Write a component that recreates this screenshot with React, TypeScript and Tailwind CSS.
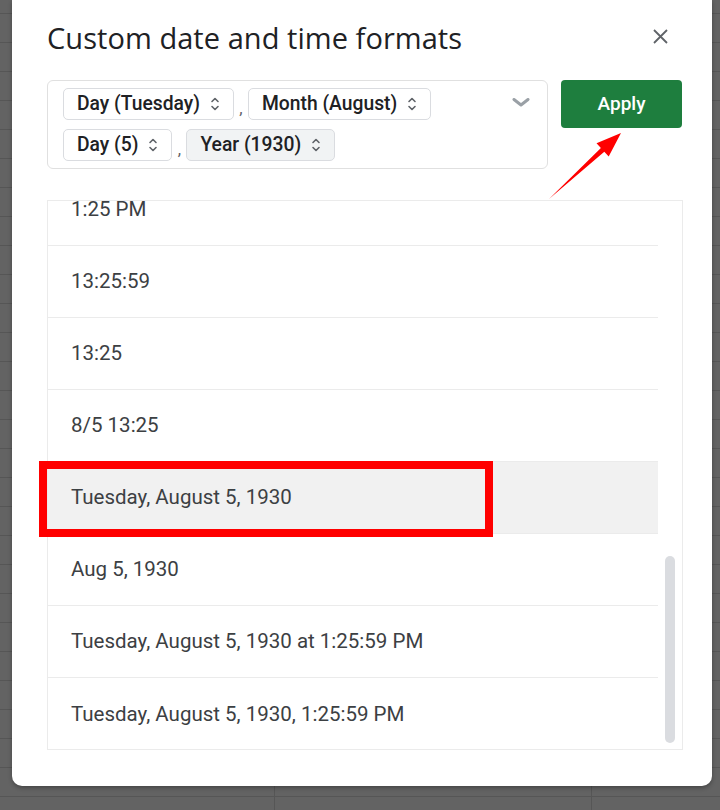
import React from 'react'

const rows = [
  '1:25 PM',
  '13:25:59',
  '13:25',
  '8/5 13:25',
  'Tuesday, August 5, 1930',
  'Aug 5, 1930',
  'Tuesday, August 5, 1930 at 1:25:59 PM',
  'Tuesday, August 5, 1930, 1:25:59 PM',
]

function UpDown() {
  return (
    <svg width="10" height="16" viewBox="0 0 10 16" fill="none" stroke="#5f6368" strokeWidth="1.6" strokeLinecap="round" strokeLinejoin="round">
      <path d="M2 5.5L5 2.5L8 5.5" />
      <path d="M2 10.5L5 13.5L8 10.5" />
    </svg>
  )
}

function Chip({ label, active }: { label: string; active?: boolean }) {
  return (
    <div
      className={`flex h-[32px] items-center gap-[10px] rounded-[5px] border border-[#dadce0] pl-[13px] pr-[13px] text-[19.3px] font-medium text-[#202124] ${
        active ? 'bg-[#f1f3f4]' : 'bg-white'
      }`}
    >
      <span>{label}</span>
      <UpDown />
    </div>
  )
}

function Comma() {
  return <span className="w-[14px] self-end pb-[2px] text-center text-[17px] leading-[20px] text-[#5f6368]">,</span>
}

export default function App() {
  return (
    <div
      className="relative h-[810px] w-[720px] overflow-hidden bg-[#636363] bg-[linear-gradient(#565656_1px,transparent_1px),linear-gradient(90deg,transparent_274px,#565656_274px,#565656_275px,transparent_275px,transparent_591px,#565656_591px,#565656_592px,transparent_592px)] bg-[size:100%_29px,100%_100%] bg-[position:0_13px,0_0]"
      style={{ fontFamily: 'Roboto, "Liberation Sans", sans-serif' }}
    >
      <div className="ml-[12px] h-[786px] w-[700px] rounded-b-[10px] bg-white pl-[35px] pr-[29px] shadow-[0_2px_4px_rgba(0,0,0,0.3)]">
        {/* header */}
        <div className="flex h-[80px] items-start justify-between">
          <h1
            className="pt-[16px] text-[29px] leading-[44px] tracking-[0.05px] text-[#202124]"
            style={{ fontFamily: '"Open Sans", Roboto, sans-serif' }}
          >
            Custom date and time formats
          </h1>
          <button className="mr-[15px] mt-[29px] text-[#5f6368]">
            <svg width="15" height="15" viewBox="0 0 15 15" stroke="currentColor" strokeWidth="1.8">
              <path d="M1 1L14 14M14 1L1 14" />
            </svg>
          </button>
        </div>

        {/* format input + apply */}
        <div className="flex items-start gap-[13px]">
          <div className="flex h-[89px] w-[501px] rounded-[6px] border border-[#e0e0e0] pl-[15px] pr-[17px] pt-[7px]">
            <div className="flex flex-1 flex-col gap-[9px]">
              <div className="flex items-center">
                <Chip label="Day (Tuesday)" />
                <Comma />
                <Chip label="Month (August)" />
              </div>
              <div className="flex items-center">
                <Chip label="Day (5)" />
                <Comma />
                <Chip label="Year (1930)" active />
              </div>
            </div>
            <svg className="mt-[10px]" width="18" height="9" viewBox="0 0 18 9" fill="none" stroke="#9aa0a6" strokeWidth="3" strokeLinecap="round" strokeLinejoin="round">
              <path d="M2 1.5L9 7L16 1.5" />
            </svg>
          </div>
          <button className="flex h-[48px] w-[121px] items-center justify-center rounded-[4px] bg-[#1e7e3e] text-[19px] font-medium text-white">
            Apply
          </button>
        </div>

        {/* list */}
        <div className="mt-[31px] flex h-[550px] w-[636px] overflow-hidden border border-[#ebebeb]">
          <div className="mt-[-27px] flex flex-1 flex-col">
            {rows.map((r, i) => (
              <div
                key={r}
                className={`flex h-[72px] shrink-0 items-center pl-[23px] text-[20.5px] text-[#3c4043] ${
                  i < rows.length - 1 ? 'border-b border-[#ebebeb]' : ''
                } ${i === 4 ? 'bg-[#f1f1f1]' : ''}`}
              >
                {r}
              </div>
            ))}
          </div>
          <div className="flex w-[24px] flex-col items-center justify-end pb-[6px]">
            <div className="h-[187px] w-[10px] rounded-full bg-[#dadce0]" />
          </div>
        </div>
      </div>

      {/* annotations */}
      <div className="pointer-events-none absolute left-[39px] top-[461px] h-[76px] w-[454px] border-[8px] border-[#ff0000]" />
      <svg className="pointer-events-none absolute left-0 top-0" width="720" height="810" viewBox="0 0 720 810">
        <polygon points="621,133 596.5,143.3 600.9,148.1 549,199 604.3,151.7 608.7,156.5" fill="#ff0000" />
      </svg>
    </div>
  )
}
